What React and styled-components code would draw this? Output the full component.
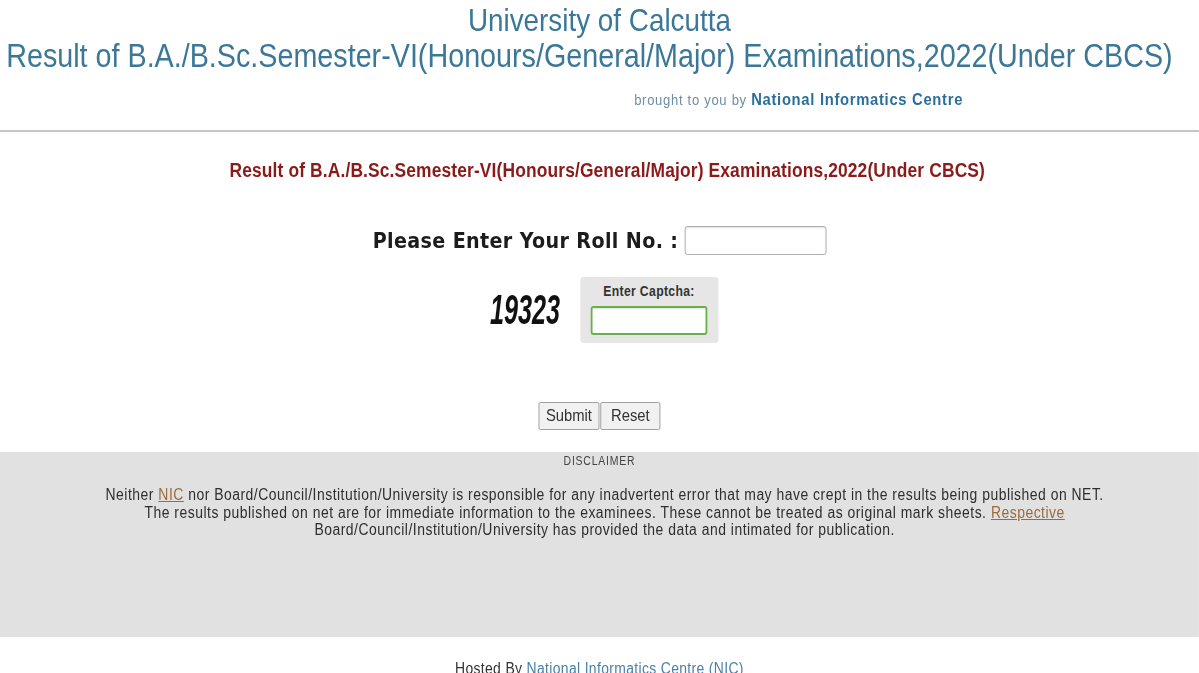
import React from 'react';
import styled, { createGlobalStyle } from 'styled-components';

// the reference is a horizontally squeezed capture, so the page is laid out
// wider and then narrowed as a whole
const SQUEEZE = 0.87;
const LAYOUT_WIDTH = Math.round(1199 / SQUEEZE);

const GlobalStyle = createGlobalStyle`
  html, body {
    margin: 0;
    padding: 0;
    overflow: hidden;
    background: #ffffff;
  }
  body {
    font-family: "Liberation Sans", Arial, sans-serif;
    color: #222;
  }
`;

const Page = styled.div`
  display: flex;
  flex-direction: column;
  width: ${LAYOUT_WIDTH}px;
  transform: scaleX(${SQUEEZE});
  transform-origin: 0 0;
`;

const Header = styled.header`
  display: flex;
  flex-direction: column;
  align-items: center;
  padding-top: 2px;
  color: #3b7897;
`;

const Title = styled.h1`
  margin: 0;
  padding-right: ${p => p.$shift || 0}px;
  font-size: ${p => p.$size}px;
  font-weight: normal;
  line-height: 36px;
  text-align: center;
  white-space: nowrap;
`;

const Credit = styled.div`
  align-self: stretch;
  display: flex;
  justify-content: flex-end;
  align-items: baseline;
  gap: 5px;
  height: 20px;
  line-height: 20px;
  margin-top: 16px;
  padding-right: 271px;
  font-size: 15px;
  letter-spacing: 0.8px;
  color: #6e8ea3;
`;

const CreditName = styled.span`
  font-size: 17px;
  font-weight: bold;
  letter-spacing: 0.8px;
  color: #2c6e9b;
`;

const Rule = styled.hr`
  margin: 20px 0 0;
  border: none;
  border-top: 2px solid #c6c6c6;
  height: 0;
`;

const Heading = styled.h2`
  margin: 26px 0 0;
  padding-left: 18px;
  line-height: 24px;
  text-align: center;
  font-size: 20px;
  font-weight: bold;
  letter-spacing: 0.15px;
  color: #8b1a1a;
`;

const Form = styled.form`
  display: flex;
  flex-direction: column;
  align-items: center;
  margin-top: 44px;
`;

const RollRow = styled.div`
  display: flex;
  align-items: center;
  gap: 7px;
  height: 29px;
`;

const RollLabel = styled.label`
  font-family: "DejaVu Sans", Verdana, sans-serif;
  font-size: 22px;
  font-weight: bold;
  letter-spacing: 0.4px;
  line-height: 29px;
  color: #1c1c1c;
`;

const TextInput = styled.input`
  box-sizing: border-box;
  width: ${p => p.$w}px;
  height: 29px;
  border: ${p => (p.$green ? '2px solid #68b146' : '1px solid #a9a9a9')};
  border-radius: 3px;
  background: #fff;
  box-shadow: inset 0 1px 2px rgba(0, 0, 0, 0.12);
`;

const CaptchaRow = styled.div`
  display: flex;
  align-items: center;
  gap: 23px;
  margin-top: 22px;
  margin-left: 11px;
`;

const CaptchaCode = styled.div`
  display: flex;
  justify-content: center;
  width: 80px;
`;

const CaptchaDigits = styled.span`
  display: inline-block;
  font-size: 42px;
  font-weight: bold;
  font-style: italic;
  line-height: 44px;
  color: #111;
  transform: scaleX(0.69);
`;

const CaptchaBox = styled.div`
  display: flex;
  flex-direction: column;
  align-items: center;
  gap: 7px;
  box-sizing: border-box;
  width: 159px;
  height: 66px;
  padding-top: 6px;
  background: #e6e6e6;
  border-radius: 4px;
`;

const CaptchaLabel = styled.span`
  font-size: 14px;
  line-height: 16px;
  font-weight: bold;
  letter-spacing: 0.4px;
  color: #333;
`;

const Buttons = styled.div`
  display: flex;
  gap: 1px;
  margin-top: 59px;
`;

const Button = styled.button`
  box-sizing: border-box;
  width: ${p => p.$w}px;
  height: 28px;
  padding: 0;
  font-family: "Liberation Sans", Arial, sans-serif;
  font-size: 17px;
  color: #333;
  background: #f1f1f1;
  border: 1px solid #9c9c9c;
  border-radius: 2px;
`;

const Disclaimer = styled.section`
  display: flex;
  flex-direction: column;
  align-items: center;
  box-sizing: border-box;
  height: 185px;
  margin-top: 22px;
  padding-top: 2px;
  background: #e1e1e1;
`;

const DisclaimerTitle = styled.div`
  font-size: 12px;
  line-height: 14px;
  letter-spacing: 0.9px;
  color: #444;
`;

const DisclaimerText = styled.p`
  margin: 18px 0 0;
  padding-left: 12px;
  text-align: center;
  font-size: 16px;
  line-height: 17.5px;
  letter-spacing: 0.58px;
  color: #2e2e2e;
`;

const Link = styled.a`
  color: #9a6b3c;
  text-decoration: underline;
`;

const Footer = styled.footer`
  margin-top: 22px;
  line-height: 20px;
  text-align: center;
  font-size: 16px;
  letter-spacing: 0.4px;
  color: #333;
`;

const FooterLink = styled.span`
  color: #4a80a8;
`;

export default function App() {
  return (
    <Page>
      <GlobalStyle />
      <Header>
        <Title $size={32}>University of Calcutta</Title>
        <Title $size={33} $shift={23}>
          Result of B.A./B.Sc.Semester-VI(Honours/General/Major) Examinations,2022(Under CBCS)
        </Title>
        <Credit>
          brought to you by <CreditName>National Informatics Centre</CreditName>
        </Credit>
      </Header>
      <Rule />
      <Heading>Result of B.A./B.Sc.Semester-VI(Honours/General/Major) Examinations,2022(Under CBCS)</Heading>
      <Form onSubmit={e => e.preventDefault()}>
        <RollRow>
          <RollLabel>Please Enter Your Roll No. :</RollLabel>
          <TextInput $w={163} />
        </RollRow>
        <CaptchaRow>
          <CaptchaCode>
            <CaptchaDigits>19323</CaptchaDigits>
          </CaptchaCode>
          <CaptchaBox>
            <CaptchaLabel>Enter Captcha:</CaptchaLabel>
            <TextInput $w={134} $green />
          </CaptchaBox>
        </CaptchaRow>
        <Buttons>
          <Button type="submit" $w={70}>Submit</Button>
          <Button type="reset" $w={69}>Reset</Button>
        </Buttons>
      </Form>
      <Disclaimer>
        <DisclaimerTitle>DISCLAIMER</DisclaimerTitle>
        <DisclaimerText>
          Neither <Link href="#">NIC</Link> nor Board/Council/Institution/University is responsible for any
          inadvertent error that may have crept in the results being published on NET.
          <br />
          The results published on net are for immediate information to the examinees. These cannot be treated
          as original mark sheets. <Link href="#">Respective</Link>
          <br />
          Board/Council/Institution/University has provided the data and intimated for publication.
        </DisclaimerText>
      </Disclaimer>
      <Footer>
        Hosted By <FooterLink>National Informatics Centre (NIC)</FooterLink>
      </Footer>
    </Page>
  );
}
